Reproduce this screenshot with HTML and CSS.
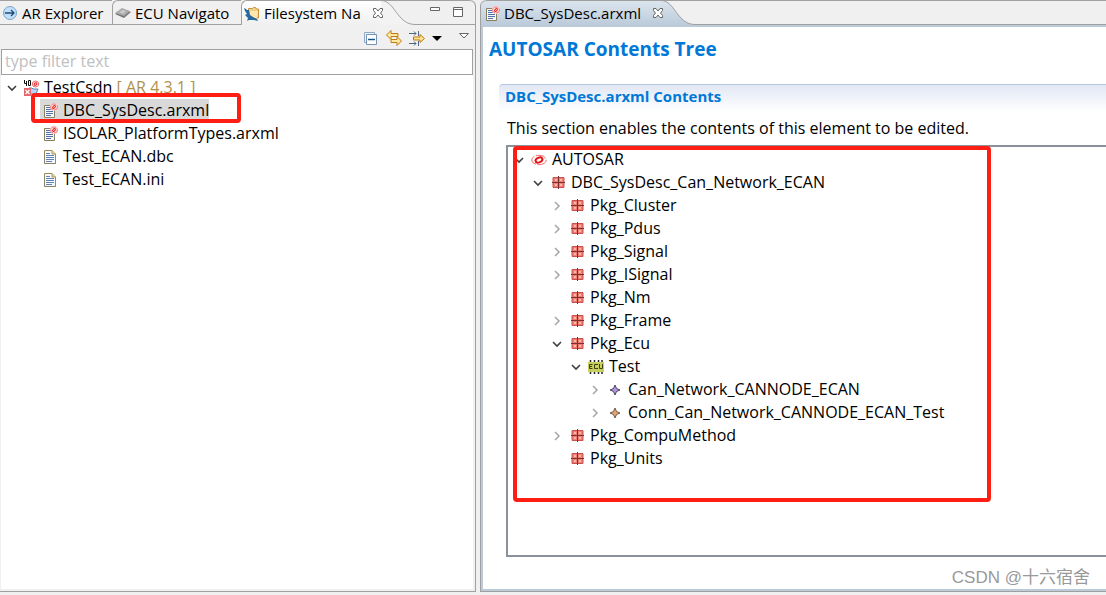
FILE: index.html
```html
<!DOCTYPE html>
<html lang="en">
<head>
  <meta charset="UTF-8">
  <meta name="viewport" content="width=device-width, initial-scale=1.0">
  <title>DBC_SysDesc.arxml</title>
  <link rel="stylesheet" href="styles.css">
</head>
<body>
  <!--ICONS-->
  <svg class="defs" width="0" height="0">
    <symbol id="open" viewBox="0 0 16 16"><path d="M4 6l4 4 4-4" fill="none" stroke="#404040" stroke-width="1.6"/></symbol>
    <symbol id="closed" viewBox="0 0 16 16"><path d="M6 4l4 4-4 4" fill="none" stroke="#a6a6a6" stroke-width="1.5"/></symbol>
    <symbol id="close" viewBox="0 0 12 12"><path d="M1.500 1.500h2.500L6 4l2-2.500h2.500v2L8.500 6l2 2.500v2H8L6 8l-2 2.500H1.500v-2L3.500 6l-2-2.500z" fill="#fff" stroke="#666"/></symbol>
    <symbol id="file" viewBox="0 0 16 16">
      <path d="M2.500 1.500h7.500l3.500 3.500v9.500h-11z" fill="#f4f8ff" stroke="#a08a52"/>
      <path d="M2.500 5v9.500h11" fill="none" stroke="#8a8465"/>
      <path d="M10 1.500v3.500h3.500" fill="#e5d6a0" stroke="#b49a55"/>
      <path d="M4 4.500h4M4 6.500h8M4 8.500h8M4 10.500h8M4 12.500h6" stroke="#6382b5"/>
    </symbol>
    <symbol id="arxml" viewBox="0 0 16 16">
      <path d="M2.500 2.500h10v12h-10z" fill="#f4f8ff" stroke="#8a7f5d"/>
      <path d="M4 4.500h4M4 6.500h5M4 8.500h7M4 10.500h7M4 12.500h5" stroke="#526fa8"/>
      <circle cx="12" cy="4" r="4" fill="#ffd7d7"/>
      <ellipse cx="12" cy="4" rx="3.500" ry="3" fill="none" stroke="#f47b7b" stroke-dasharray="5 1"/>
      <ellipse cx="12" cy="4" rx="1.700" ry="1" fill="#fff" stroke="#e01818" transform="rotate(-45 12 4)"/>
    </symbol>
    <symbol id="project" viewBox="0 0 16 16">
      <path d="M6 8h3l1 1h5l-2 5H6z" fill="#b9d4f5" stroke="#5d83bd"/>
      <path d="M1.500 0v3.500H4M3.500 1v5M5.500 .5h2v5h-2z" fill="none" stroke="#111"/>
      <ellipse cx="12.500" cy="4" rx="3.200" ry="3" fill="#ffe4e4" stroke="#ef6c6c"/>
      <ellipse cx="12.500" cy="4" rx="1.500" ry="1" fill="#fff" stroke="#e01818" transform="rotate(-40 12.500 4)"/>
      <path d="M1 8h7v8H1z" fill="#e5656b"/>
      <path d="M2.500 10l4 4M6.500 10l-4 4" stroke="#fff" stroke-width="1.400"/>
    </symbol>
    <symbol id="autosar" viewBox="0 0 16 16">
      <ellipse cx="8" cy="8" rx="7.300" ry="4.700" fill="#fff" stroke="#f06a6a" stroke-dasharray="11 1.500"/>
      <ellipse cx="8" cy="8" rx="3.600" ry="2.300" fill="#fff" stroke="#e51212" stroke-width="2" transform="rotate(-25 8 8)"/>
    </symbol>
    <symbol id="package" viewBox="0 0 16 16">
      <path d="M3 2.500h11v10H3z" fill="#f17c72" stroke="#c9524f"/>
      <path d="M5 4h2v2H5zM10 4h2v2h-2zM5 9h2v2H5zM10 9h2v2h-2z" fill="#ffb8a9"/>
      <path d="M8.500 1v13M2 7.500h13" stroke="#7d3030"/>
    </symbol>
    <symbol id="ecu" viewBox="0 0 16 16">
      <path d="M2.500 1v14M6.500 1v14M10.500 1v14M14 1v14" stroke="#222" stroke-width="1.500"/>
      <path d="M0 3h16v10H0z" fill="#c8cf5d"/>
      <path d="M4.500 5.500h-3v4h3M1.500 7.500H4M10 5.500H6.500v4H10M11.500 5v4.500h3V5" fill="none" stroke="#3c4217"/>
    </symbol>
    <symbol id="star-purple" viewBox="0 0 16 16"><path d="M8 3L9.500 6.500 13 8 9.500 9.500 8 13 6.500 9.500 3 8 6.500 6.500z" fill="#b492df" stroke="#4b4559"/></symbol>
    <symbol id="star-brown" viewBox="0 0 16 16"><path d="M8 3L9.500 6.500 13 8 9.500 9.500 8 13 6.500 9.500 3 8 6.500 6.500z" fill="#e0a575" stroke="#6d5a4c"/></symbol>
  </svg>

  <main class="workbench">
    <!--NAVIGATOR-->
    <section class="pane navigator">
      <div class="tabs">
        <button class="tab">
          <svg class="icon" viewBox="0 0 16 16"><circle cx="8" cy="8" r="6.500" fill="#bfe0fa" stroke="#7ba3c7"/><path d="M3 8h9M9 5l3 3-3 3" fill="none" stroke="#234777" stroke-width="1.300"/></svg>
          AR Explorer
        </button>
        <button class="tab tab-split">
          <svg class="icon" viewBox="0 0 16 16"><path d="M0 9l7-5 9 3-7 6z" fill="#777"/><path d="M0 8l7-5 8 3-6 5z" fill="#aaa"/><path d="M4 7l4-2 3 1-3 3z" fill="#c9c9c9"/></svg>
          ECU Navigato
        </button>
        <div class="tab-active">
          <button class="tab">
            <svg class="icon" viewBox="0 0 16 16"><path d="M4.500 5V2.500h4l1-1h2l1 1.500h2v9h-10z" fill="#f3cf83" stroke="#c5923f"/><path d="M6 5h8l-1 7H6z" fill="#ffe7ae"/><path d="M0 2l2 1 1 1h2l1 5 3 2 4 2 1 2-4-1H5l-2 1 1-3-3-3 2-1-2-3z" fill="#25699f"/></svg>
            Filesystem Na
          </button>
          <button class="tab-close" aria-label="Close"><svg viewBox="0 0 12 12"><use href="#close"/></svg></button>
        </div>
        <svg class="curve" viewBox="0 0 34 25"><path d="M0 0C14 0 16 24.500 34 24.500H0z" fill="#f3f3f3"/><path d="M0 .5C14 .5 16 24.500 34 24.500" fill="none" stroke="#a0a0a0"/></svg>
        <div class="tab-fill">
          <button class="tool" aria-label="Minimize"><svg class="icon" viewBox="0 0 16 16"><path d="M3.500 2.500h9v3h-9z" fill="#fff" stroke="#666"/></svg></button>
          <button class="tool" aria-label="Maximize"><svg class="icon" viewBox="0 0 16 16"><path d="M3.500 2.500h9v9h-9zM3.500 4.500h9" fill="#fff" stroke="#666"/></svg></button>
        </div>
      </div>
      <div class="toolbar">
        <button class="tool" aria-label="Collapse all"><svg class="icon" viewBox="0 0 16 16"><path d="M1.500 2.500h10v10h-10z" fill="#eaf3fc" stroke="#8fa9c6"/><path d="M3.500 4.500h10v10h-10z" fill="#fff" stroke="#7894b5"/><path d="M5 9.500h7" stroke="#17598f" stroke-width="1.500"/></svg></button>
        <button class="tool" aria-label="Link with editor"><svg class="icon" viewBox="0 0 16 16"><path d="M5 .5v3h7v3H5v3L.5 5zM11 6.500v3H5v3h6v3l4.500-4.500z" fill="#ffe8a0" stroke="#bd7d12"/></svg></button>
        <button class="tool" aria-label="Filters"><svg class="icon" viewBox="0 0 16 16"><path d="M0 3.500h7M0 13.500h7M5 1.500l2 2-2 2M5 11.500l2 2-2 2M9.500 1v5M9.500 11v5" fill="none" stroke="#51677f"/><path d="M4.500 7H11V4.500l4.500 4-4.500 4V10H4.500z" fill="#ffe391" stroke="#bd7d12"/></svg></button>
        <button class="tool filter-menu" aria-label="Filter menu"><svg class="icon" viewBox="0 0 16 16"><path d="M3 6h10l-5 5z" fill="#000"/></svg></button>
        <button class="tool view-menu" aria-label="View menu"><svg class="icon" viewBox="0 0 16 16"><path d="M3.500 3.500h9L8 8z" fill="#fff" stroke="#666"/></svg></button>
      </div>
      <div class="nav-body">
        <input class="filter" type="text" placeholder="type filter text" aria-label="Filter">
        <ul class="tree">
          <li>
            <div class="row"><button class="twisty" aria-label="Collapse"><svg class="icon"><use href="#open"/></svg></button><svg class="icon"><use href="#project"/></svg><span>TestCsdn <span class="version">[ AR 4.3.1 ]</span></span></div>
            <ul>
              <li class="row"><span class="selected"><svg class="icon"><use href="#arxml"/></svg>DBC_SysDesc.arxml</span></li>
              <li class="row"><svg class="icon"><use href="#arxml"/></svg>ISOLAR_PlatformTypes.arxml</li>
              <li class="row"><svg class="icon"><use href="#file"/></svg>Test_ECAN.dbc</li>
              <li class="row"><svg class="icon"><use href="#file"/></svg>Test_ECAN.ini</li>
            </ul>
          </li>
        </ul>
      </div>
      <div class="mark mark-file"></div>
    </section>

    <!--EDITOR-->
    <section class="pane editor">
      <div class="tabs">
        <div class="tab-active">
          <button class="tab"><svg class="icon"><use href="#arxml"/></svg>DBC_SysDesc.arxml</button>
          <button class="tab-close" aria-label="Close"><svg viewBox="0 0 12 12"><use href="#close"/></svg></button>
        </div>
        <svg class="curve" viewBox="0 0 34 25">
          <linearGradient id="tabfill" x2="0" y2="1"><stop stop-color="#dce5ee"/><stop offset="1" stop-color="#bccbda"/></linearGradient>
          <path d="M0 0C14 0 16 24.500 34 24.500V25H0z" fill="url(#tabfill)"/><path d="M0 .5C14 .5 16 24.500 34 24.500" fill="none" stroke="#a0a0a0"/>
        </svg>
        <div class="tab-fill"></div>
      </div>
      <div class="editor-body">
        <h1>AUTOSAR Contents Tree</h1>
        <div class="section">
          <h2>DBC_SysDesc.arxml Contents</h2>
          <p>This section enables the contents of this element to be edited.</p>
          <div class="tree-box">
            <ul class="tree">
              <li>
                <div class="row"><button class="twisty" aria-label="Collapse"><svg class="icon"><use href="#open"/></svg></button><svg class="icon"><use href="#autosar"/></svg>AUTOSAR</div>
                <ul>
                  <li>
                    <div class="row"><button class="twisty" aria-label="Collapse"><svg class="icon"><use href="#open"/></svg></button><svg class="icon"><use href="#package"/></svg>DBC_SysDesc_Can_Network_ECAN</div>
                    <ul>
                      <li class="row"><button class="twisty" aria-label="Expand"><svg class="icon"><use href="#closed"/></svg></button><svg class="icon"><use href="#package"/></svg>Pkg_Cluster</li>
                      <li class="row"><button class="twisty" aria-label="Expand"><svg class="icon"><use href="#closed"/></svg></button><svg class="icon"><use href="#package"/></svg>Pkg_Pdus</li>
                      <li class="row"><button class="twisty" aria-label="Expand"><svg class="icon"><use href="#closed"/></svg></button><svg class="icon"><use href="#package"/></svg>Pkg_Signal</li>
                      <li class="row"><button class="twisty" aria-label="Expand"><svg class="icon"><use href="#closed"/></svg></button><svg class="icon"><use href="#package"/></svg>Pkg_ISignal</li>
                      <li class="row leaf"><svg class="icon"><use href="#package"/></svg>Pkg_Nm</li>
                      <li class="row"><button class="twisty" aria-label="Expand"><svg class="icon"><use href="#closed"/></svg></button><svg class="icon"><use href="#package"/></svg>Pkg_Frame</li>
                      <li>
                        <div class="row"><button class="twisty" aria-label="Collapse"><svg class="icon"><use href="#open"/></svg></button><svg class="icon"><use href="#package"/></svg>Pkg_Ecu</div>
                        <ul>
                          <li>
                            <div class="row"><button class="twisty" aria-label="Collapse"><svg class="icon"><use href="#open"/></svg></button><svg class="icon"><use href="#ecu"/></svg>Test</div>
                            <ul>
                              <li class="row"><button class="twisty" aria-label="Expand"><svg class="icon"><use href="#closed"/></svg></button><svg class="icon"><use href="#star-purple"/></svg>Can_Network_CANNODE_ECAN</li>
                              <li class="row"><button class="twisty" aria-label="Expand"><svg class="icon"><use href="#closed"/></svg></button><svg class="icon"><use href="#star-brown"/></svg>Conn_Can_Network_CANNODE_ECAN_Test</li>
                            </ul>
                          </li>
                        </ul>
                      </li>
                      <li class="row"><button class="twisty" aria-label="Expand"><svg class="icon"><use href="#closed"/></svg></button><svg class="icon"><use href="#package"/></svg>Pkg_CompuMethod</li>
                      <li class="row leaf"><svg class="icon"><use href="#package"/></svg>Pkg_Units</li>
                    </ul>
                  </li>
                </ul>
              </li>
            </ul>
            <div class="mark mark-tree"></div>
          </div>
        </div>
      </div>
      <div class="watermark">CSDN @十六宿舍</div>
    </section>
  </main>
</body>
</html>
```

FILE: styles.css
```css
* {
  box-sizing: border-box;
}
body {
  margin: 0;
  background: #f0f0f0;
  color: #000;
  font-family: "Open Sans", "Noto Sans CJK SC", sans-serif;
  font-size: 16px;
  line-height: 23px;
}
button {
  display: flex;
  align-items: center;
  padding: 0;
  border: none;
  background: none;
  color: inherit;
  font: inherit;
}
ul {
  margin: 0;
  padding: 0;
  list-style: none;
}
.defs {
  position: absolute;
}
.icon {
  flex: none;
  width: 16px;
  height: 16px;
}
.workbench {
  display: grid;
  grid-template-columns: 476px minmax(0, 1fr);
  gap: 4px;
  height: 100vh;
  padding-bottom: 3px;
}
.pane {
  position: relative;
  display: flex;
  flex-direction: column;
  min-height: 0;
  border-bottom: 1px solid #a0a0a0;
}
.navigator {
  border-right: 1px solid #a0a0a0;
  border-top-right-radius: 6px;
}
.editor {
  border-left: 1px solid #a0a0a0;
  border-top-left-radius: 6px;
  overflow: hidden;
}

/* tabs */
.tabs {
  display: flex;
  height: 25px;
  font-size: 15px;
  white-space: nowrap;
}
.tab {
  gap: 4px;
  padding: 1px 4px 0 2px;
}
.tabs > .tab {
  border-top: 1px solid #a0a0a0;
  border-bottom: 1px solid #a0a0a0;
}
.tab-split {
  width: 129px;
  border-left: 1px solid #a0a0a0;
  border-top-left-radius: 6px;
}
.tabs > .tab:first-child {
  width: 112px;
}
.tab-active {
  display: flex;
  align-items: center;
  border-top: 1px solid #a0a0a0;
  border-left: 1px solid #a0a0a0;
  border-top-left-radius: 6px;
  background: linear-gradient(#fff, #f0f0f0);
}
.editor .tab-active {
  border-left: none;
  background: linear-gradient(#dce5ee, #bccbda);
}
.editor .tab {
  padding-left: 3px;
}
.tab-close svg {
  width: 12px;
  height: 12px;
}
.tab-close {
  position: relative;
  z-index: 1;
  margin: 0 -3px 0 7px;
}
.curve {
  flex: none;
  width: 34px;
  height: 25px;
}
.tab-fill {
  flex: 1;
  display: flex;
  justify-content: flex-end;
  gap: 7px;
  padding-right: 9px;
  border-top: 1px solid #a0a0a0;
  border-bottom: 1px solid #a0a0a0;
  border-top-right-radius: 6px;
}
.curve + .tab-fill {
  margin-left: -34px;
  border-bottom: none;
  background: linear-gradient(#a0a0a0, #a0a0a0) 34px 100% / 100% 1px no-repeat;
}
.editor .tab-fill {
  border-radius: 0;
}
.toolbar {
  display: flex;
  justify-content: flex-end;
  align-items: center;
  gap: 7px;
  height: 25px;
  padding-right: 3px;
}
.toolbar .filter-menu {
  margin-left: -3px;
}
.toolbar .view-menu {
  margin-left: 4px;
}

/* navigator */
.nav-body {
  flex: 1;
  display: flex;
  flex-direction: column;
  margin: 0 2px 2px 1px;
  background: #fff;
}
.filter {
  height: 26px;
  margin: -1px 0 0;
  padding: 0 3px 2px;
  border: 1px solid #a0a0a0;
  background: #fff;
  font: inherit;
}
.filter::placeholder {
  color: #c0c0c0;
}
.nav-body .tree {
  padding: 1px 0 0 3px;
}
.row {
  display: flex;
  align-items: center;
  gap: 5px;
  height: 23px;
  white-space: nowrap;
}
.twisty {
  margin-right: -2px;
}
.nav-body ul ul {
  padding-left: 38px;
}
.selected {
  display: flex;
  align-items: center;
  gap: 5px;
  margin-left: -2px;
  padding-left: 2px;
  background: #d9d9d9;
}
.version {
  color: #b0914c;
}

/* editor */
.editor-body {
  flex: 1;
  display: flex;
  flex-direction: column;
  min-height: 0;
  padding-left: 6px;
  border: 2px solid #bccbda;
  border-right: none;
  background: #fff;
}
h1,
h2 {
  margin: 0;
  color: #0078d7;
  font-weight: bold;
}
h1 {
  padding: 10px 0 23px;
  font-size: 19px;
  line-height: 24px;
}
.section {
  flex: 1;
  display: flex;
  flex-direction: column;
  margin-left: 10px;
}
h2 {
  height: 28px;
  padding: 0 6px;
  border-top: 1px solid #b5c8df;
  border-top-left-radius: 4px;
  background: linear-gradient(#e1e7f4, #fff);
  font-size: 15px;
}
.section p {
  margin: 0;
  padding: 5px 8px 5px;
}
.tree-box {
  position: relative;
  flex: 1;
  margin: 0 0 32px 7px;
  padding: 1px 0 0 3px;
  border: 2px solid #8a919b;
  border-right: none;
}
.tree-box .twisty {
  margin-right: -1px;
}
.tree-box ul ul {
  padding-left: 19px;
}
.leaf {
  padding-left: 20px;
}

/* highlights */
.mark {
  position: absolute;
  border: 4px solid #ff1e14;
  border-radius: 4px;
}
.mark-file {
  top: 93px;
  left: 31px;
  width: 210px;
  height: 30px;
}
.mark-tree {
  top: -1px;
  left: 5px;
  width: 478px;
  height: 356px;
}
.watermark {
  position: absolute;
  right: 16px;
  bottom: 2px;
  color: #999;
  font-family: "Liberation Sans", "Noto Sans CJK SC", sans-serif;
  font-size: 17px;
}
```
